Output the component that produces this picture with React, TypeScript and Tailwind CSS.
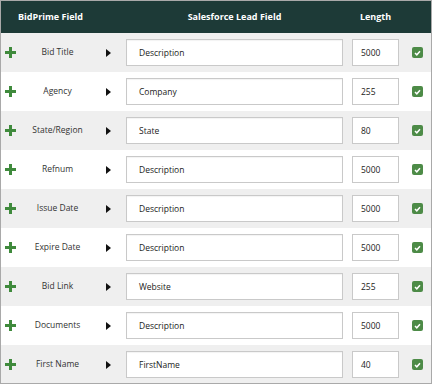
import React from 'react';

const rows = [
  { label: 'Bid Title', field: 'Description', length: '5000' },
  { label: 'Agency', field: 'Company', length: '255' },
  { label: 'State/Region', field: 'State', length: '80' },
  { label: 'Refnum', field: 'Description', length: '5000' },
  { label: 'Issue Date', field: 'Description', length: '5000' },
  { label: 'Expire Date', field: 'Description', length: '5000' },
  { label: 'Bid Link', field: 'Website', length: '255' },
  { label: 'Documents', field: 'Description', length: '5000' },
  { label: 'First Name', field: 'FirstName', length: '40' },
];

const PlusIcon = () => (
  <svg width="11" height="11" viewBox="0 0 11 11">
    <rect x="4" y="0" width="3" height="11" fill="#3f8a3c" />
    <rect x="0" y="4" width="11" height="3" fill="#3f8a3c" />
  </svg>
);

const Arrow = () => (
  <svg width="5" height="8" viewBox="0 0 5 8">
    <path d="M0 0 L5 4 L0 8 Z" fill="#111" />
  </svg>
);

const Check = () => (
  <div className="w-[11px] h-[11px] rounded-[2px] bg-[#4d8b47] flex items-center justify-center">
    <svg width="7" height="6" viewBox="0 0 7 6">
      <path d="M1 3 L2.8 4.8 L6 1.2" stroke="#fff" strokeWidth="1.5" fill="none" />
    </svg>
  </div>
);

export default function App() {
  return (
    <div
      className="w-[432px] h-[384px] border border-[#a9a9a9] bg-white overflow-hidden"
      style={{ fontFamily: '"Open Sans", sans-serif' }}
    >
      {/* Header */}
      <div className="h-[32px] bg-[#1d3a37] flex items-center text-white font-bold text-[9px]">
        <div className="w-[99px] text-center">BidPrime Field</div>
        <div className="w-[26px]" />
        <div className="w-[217px] text-center">Salesforce Lead Field</div>
        <div className="w-[9px]" />
        <div className="w-[47px] text-center">Length</div>
      </div>

      {rows.map((r, i) => (
        <div
          key={i}
          className={`h-[39px] flex items-center ${i % 2 === 0 ? 'bg-[#efefef]' : 'bg-white'}`}
        >
          <div className="w-[15px] pl-[4px] flex items-center">
            <PlusIcon />
          </div>
          <div className="w-[83px] text-center text-[8.5px] text-[#333] -mt-[1px]">{r.label}</div>
          <div className="w-[27px] pl-[7px] flex items-center">
            <Arrow />
          </div>
          <div className="w-[217px] h-[27px] border border-[#c9c9c9] bg-white flex items-center pl-[12px] pt-[2px] text-[8.5px] text-[#222] shadow-[inset_0_1px_1px_rgba(0,0,0,0.05)]">
            {r.field}
          </div>
          <div className="w-[9px]" />
          <div className="w-[47px] h-[27px] border border-[#c9c9c9] bg-white flex items-center pl-[8px] pt-[1px] text-[8.5px] text-[#222]">
            {r.length}
          </div>
          <div className="w-[13px]" />
          <Check />
        </div>
      ))}
    </div>
  );
}
